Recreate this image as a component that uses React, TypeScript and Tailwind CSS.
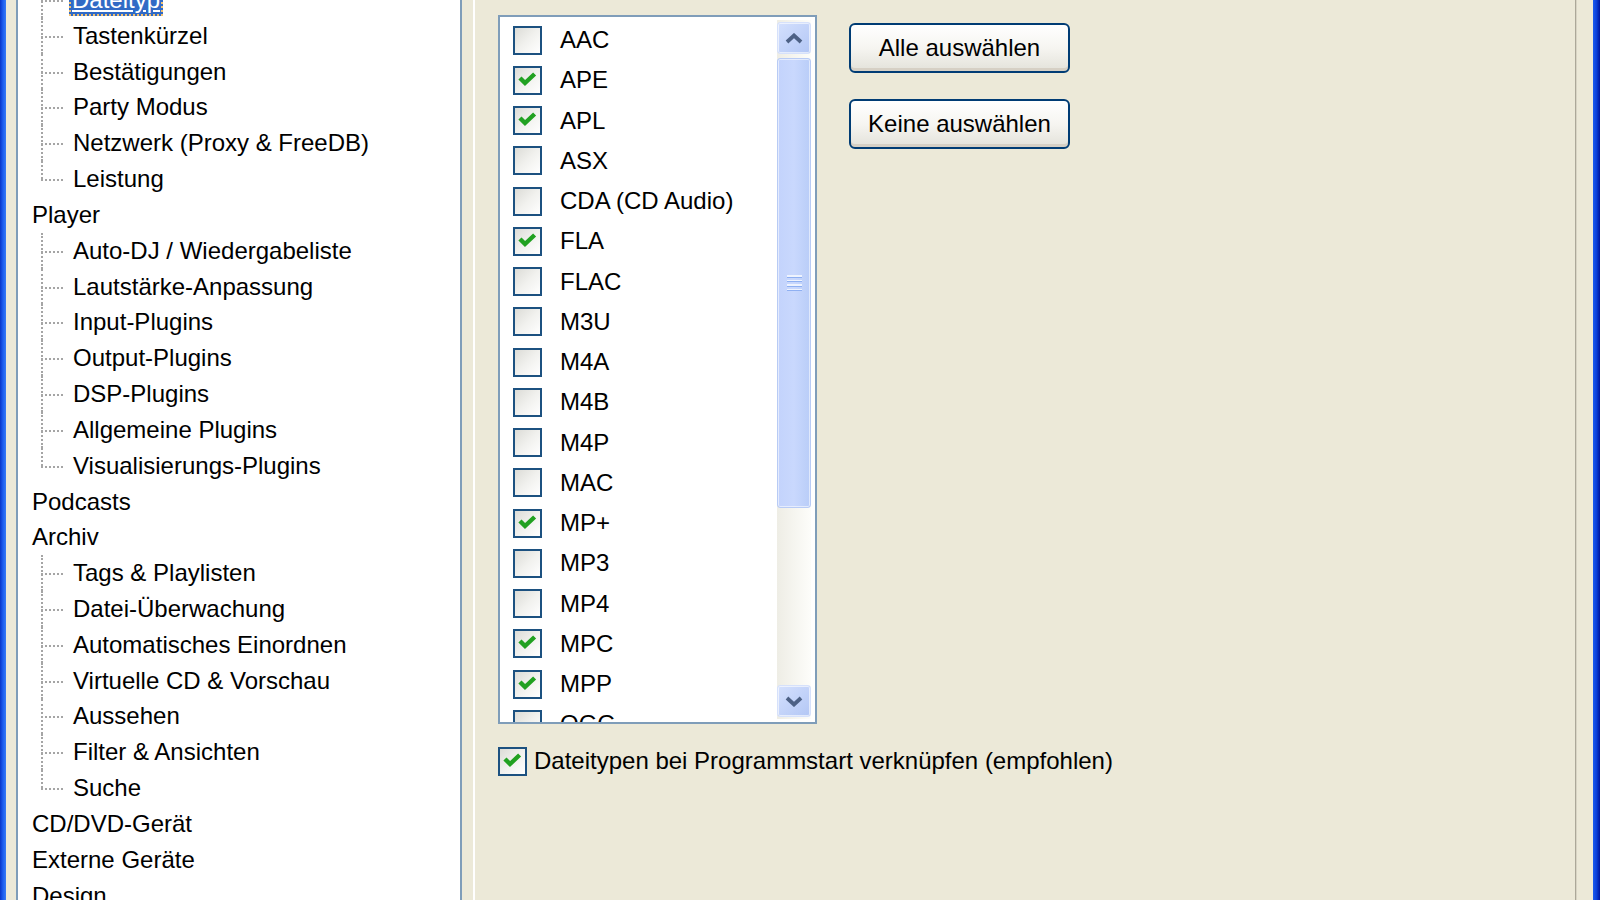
import React from "react";

type TreeGroup = {
  label?: string;
  children: string[];
};

const tree: TreeGroup[] = [
  {
    children: [
      "Dateityp",
      "Tastenkürzel",
      "Bestätigungen",
      "Party Modus",
      "Netzwerk (Proxy & FreeDB)",
      "Leistung",
    ],
  },
  {
    label: "Player",
    children: [
      "Auto-DJ / Wiedergabeliste",
      "Lautstärke-Anpassung",
      "Input-Plugins",
      "Output-Plugins",
      "DSP-Plugins",
      "Allgemeine Plugins",
      "Visualisierungs-Plugins",
    ],
  },
  { label: "Podcasts", children: [] },
  {
    label: "Archiv",
    children: [
      "Tags & Playlisten",
      "Datei-Überwachung",
      "Automatisches Einordnen",
      "Virtuelle CD & Vorschau",
      "Aussehen",
      "Filter & Ansichten",
      "Suche",
    ],
  },
  { label: "CD/DVD-Gerät", children: [] },
  { label: "Externe Geräte", children: [] },
  { label: "Design", children: [] },
];

const fileTypes: [string, boolean][] = [
  ["AAC", false],
  ["APE", true],
  ["APL", true],
  ["ASX", false],
  ["CDA (CD Audio)", false],
  ["FLA", true],
  ["FLAC", false],
  ["M3U", false],
  ["M4A", false],
  ["M4B", false],
  ["M4P", false],
  ["MAC", false],
  ["MP+", true],
  ["MP3", false],
  ["MP4", false],
  ["MPC", true],
  ["MPP", true],
  ["OGG", false],
];

function XpCheckbox({ checked }: { checked: boolean }) {
  return (
    <div className="relative w-[29px] h-[29px] shrink-0 border-2 border-[#1c5180] bg-gradient-to-br from-[#dcdcd7] via-[#f1f1ee] to-white">
      {checked && (
        <svg viewBox="0 0 25 25" className="absolute inset-0 w-[25px] h-[25px]">
          <polyline
            points="6.5,11.5 10,15 18,7.5"
            fill="none"
            stroke="#21a121"
            strokeWidth="4.4"
            strokeLinecap="square"
          />
        </svg>
      )}
    </div>
  );
}

function ChildRow({ label, last, selected }: { label: string; last: boolean; selected?: boolean }) {
  return (
    <div className="relative h-[35.84px] flex items-center pl-[51px]">
      {/* tree connector lines */}
      <span
        className={`absolute left-[23px] top-0 border-l-2 border-dotted border-[#a5a5a5] ${last ? "h-1/2" : "h-full"}`}
      />
      <span className="absolute left-[23px] top-1/2 w-[22px] border-t-2 border-dotted border-[#a5a5a5]" />
      {selected ? (
        <span className="h-[33px] px-[3px] flex items-center bg-[#316ac5] text-white underline outline-2 outline-dotted outline-[#f0c070] -outline-offset-2">
          {label}
        </span>
      ) : (
        <span className="px-[4px]">{label}</span>
      )}
    </div>
  );
}

function ScrollButton({ up }: { up: boolean }) {
  return (
    <div className="h-[32px] rounded-[3px] border border-[#d6e1fb] bg-gradient-to-br from-[#d4e0fd] to-[#b3c7f5] shadow-[inset_0_0_0_1px_rgba(255,255,255,0.6)] flex items-center justify-center">
      <svg viewBox="0 0 18 11" className="w-[18px] h-[11px]">
        <polyline
          points={up ? "2,9 9,2.5 16,9" : "2,2 9,8.5 16,2"}
          fill="none"
          stroke="#4d6185"
          strokeWidth="3.8"
        />
      </svg>
    </div>
  );
}

function XpButton({ children }: { children: React.ReactNode }) {
  return (
    <button className="w-[221px] h-[50px] rounded-[6px] border-2 border-[#003c74] bg-gradient-to-b from-white via-[#f6f5f1] to-[#e3e2da] shadow-[inset_0_-3px_0_#d6d0c5] text-[24px] text-black">
      {children}
    </button>
  );
}

export default function App() {
  return (
    <div className="w-full h-[900px] overflow-hidden flex bg-[#ece9d8] font-['Liberation_Sans',Arial,sans-serif] text-[24px] text-black">
      {/* left window frame */}
      <div className="w-[6px] shrink-0 bg-gradient-to-r from-[#0a34c8] via-[#1f5ef0] to-[#3a7cf5]" />

      {/* options tree */}
      <div className="ml-[10px] w-[446px] shrink-0 h-full border-x-2 border-[#7f9db9] bg-white overflow-hidden">
        <div className="-mt-[18px]">
          {tree.map((group, gi) => (
            <div key={gi}>
              {group.label && (
                <div className="h-[35.84px] flex items-center pl-[14px]">{group.label}</div>
              )}
              {group.children.map((child, ci) => (
                <ChildRow
                  key={child}
                  label={child}
                  last={ci === group.children.length - 1}
                  selected={gi === 0 && ci === 0}
                />
              ))}
            </div>
          ))}
        </div>
      </div>

      {/* panel edge */}
      <div className="ml-[11px] w-[2px] shrink-0 bg-white" />

      {/* settings page */}
      <div className="flex-1 flex pl-[23px]">
        <div className="w-[319px] shrink-0 flex flex-col pt-[15px]">
          <div className="w-[319px] h-[709px] border-2 border-[#7f9db9] bg-white flex overflow-hidden">
            <div className="flex-1 pt-[3px] overflow-hidden">
              {fileTypes.map(([name, checked]) => (
                <div key={name} className="h-[40.25px] flex items-center pl-[13px] gap-[18px]">
                  <XpCheckbox checked={checked} />
                  <span>{name}</span>
                </div>
              ))}
            </div>
            {/* scrollbar */}
            <div className="w-[34px] mr-[4px] my-[3px] flex flex-col bg-gradient-to-r from-[#eeede5] to-[#fdfdfa]">
              <div className="pt-[2px]">
                <ScrollButton up />
              </div>
              <div className="mt-[4px] h-[450px] rounded-[3px] border border-[#b8cbf5] bg-gradient-to-r from-[#c3d3fc] via-[#c9d8fd] to-[#b9cdf8] shadow-[inset_0_0_0_1px_rgba(255,255,255,0.55)] flex items-center justify-center">
                <div className="flex flex-col gap-[2px]">
                  <div className="w-[15px] h-[2.5px] bg-[#eef3fe] border-b border-[#8fb0f2]" />
                  <div className="w-[15px] h-[2.5px] bg-[#eef3fe] border-b border-[#8fb0f2]" />
                  <div className="w-[15px] h-[2.5px] bg-[#eef3fe] border-b border-[#8fb0f2]" />
                  <div className="w-[15px] h-[2.5px] bg-[#eef3fe] border-b border-[#8fb0f2]" />
                </div>
              </div>
              <div className="flex-1" />
              <div className="pb-[2px]">
                <ScrollButton up={false} />
              </div>
            </div>
          </div>

          <div className="mt-[19px] flex items-center gap-[7px] whitespace-nowrap">
            <XpCheckbox checked />
            <span>Dateitypen bei Programmstart verknüpfen (empfohlen)</span>
          </div>
        </div>

        <div className="ml-[32px] pt-[23px] flex flex-col gap-[26px]">
          <XpButton>Alle auswählen</XpButton>
          <XpButton>Keine auswählen</XpButton>
        </div>

        <div className="flex-1" />

        {/* right edge of the dialog */}
        <div className="w-[2px] shrink-0 bg-[#aca899] border-r border-[#d8d4c4]" />
        <div className="w-[16px] shrink-0" />
      </div>

      {/* right window frame */}
      <div className="w-[7px] shrink-0 bg-gradient-to-r from-[#1a5cf0] via-[#0b3fd8] to-[#00139c]" />
    </div>
  );
}
